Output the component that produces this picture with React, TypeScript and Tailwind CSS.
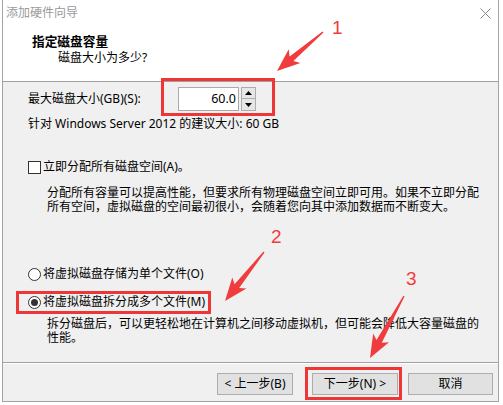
import React from "react";

type Pt = [number, number];

// Polygon for a tapered annotation arrow running from a tail point to its tip.
function arrowPoints(tail: Pt, tip: Pt, head = 19, hw = 9, sw = 3): string {
  const [x1, y1] = tail;
  const [x2, y2] = tip;
  const dx = x2 - x1;
  const dy = y2 - y1;
  const len = Math.hypot(dx, dy);
  const ux = dx / len;
  const uy = dy / len;
  const nx = -uy;
  const ny = ux;
  const bx = x2 - ux * head;
  const by = y2 - uy * head;
  const pts: Pt[] = [
    [x1 + nx * 0.7, y1 + ny * 0.7],
    [bx + nx * sw, by + ny * sw],
    [bx - ux * 4 + nx * hw, by - uy * 4 + ny * hw],
    [x2, y2],
    [bx - ux * 4 - nx * hw, by - uy * 4 - ny * hw],
    [bx - nx * sw, by - ny * sw],
    [x1 - nx * 0.7, y1 - ny * 0.7],
  ];
  return pts.map((p) => `${p[0].toFixed(1)},${p[1].toFixed(1)}`).join(" ");
}

function Radio({ checked }: { checked?: boolean }) {
  return (
    <span className="w-[13px] h-[13px] rounded-full border border-[#333333] bg-white flex items-center justify-center shrink-0">
      {checked && <span className="w-[7px] h-[7px] rounded-full bg-[#333333]" />}
    </span>
  );
}

function Button({ w, children }: { w: string; children: React.ReactNode }) {
  return (
    <div
      className={`${w} h-[22px] bg-[#e1e1e1] border border-[#adadad] flex items-center justify-center leading-[16px] whitespace-nowrap`}
    >
      {children}
    </div>
  );
}

export default function App() {
  return (
    <div className="w-[503px] h-[405px] bg-white relative overflow-hidden font-['Noto_Sans','Noto_Sans_CJK_SC',sans-serif] text-[12px] text-black">
      <div className="ml-[2px] w-[497px] h-[402px] border-x border-b border-[#a3a3a3] flex flex-col">
        {/* title bar */}
        <div className="h-[26px] bg-white flex items-center justify-between pl-[3px] pr-[7px]">
          <span className="text-[#9a9a9a] leading-[16px] text-[12px]">添加硬件向导</span>
          <svg width="11" height="11" viewBox="0 0 11 11">
            <path d="M0.5 0.5 L10.5 10.5 M10.5 0.5 L0.5 10.5" stroke="#8a8a8a" strokeWidth="1" />
          </svg>
        </div>

        {/* header */}
        <div className="h-[56px] bg-white border-b border-[#a0a0a0] pl-[29px] pt-[7px]">
          <div className="font-bold text-[12.7px] leading-[16px]">指定磁盘容量</div>
          <div className="mt-[1px] ml-[26px] leading-[16px]">磁盘大小为多少?</div>
        </div>

        {/* body */}
        <div className="h-[280px] bg-[#f0f0f0] pl-[25px] flex flex-col whitespace-nowrap">
          <div className="mt-[5px] h-[24px] flex items-center">
            <span className="w-[150px] leading-[16px]">最大磁盘大小(GB)(S):</span>
            <div className="w-[61px] h-[24px] bg-white border border-[#a9a9a9] flex items-center justify-end pr-[2px] leading-[16px] text-[12.5px]">
              60.0
            </div>
            <div className="ml-[2px] w-[15px] h-[24px] flex flex-col">
              <div className="h-[12px] bg-[#e6e6e6] border border-[#adadad] flex items-center justify-center">
                <svg width="7" height="4" viewBox="0 0 7 4">
                  <path d="M3.5 0 L7 4 L0 4 Z" fill="#000" />
                </svg>
              </div>
              <div className="h-[12px] bg-[#e6e6e6] border border-t-0 border-[#adadad] flex items-center justify-center">
                <svg width="7" height="4" viewBox="0 0 7 4">
                  <path d="M0 0 L7 0 L3.5 4 Z" fill="#000" />
                </svg>
              </div>
            </div>
          </div>

          <div className="mt-[5px] leading-[16px]">针对 Windows Server 2012 的建议大小: 60 GB</div>

          <div className="mt-[27px] flex items-center gap-[2px] leading-[16px]">
            <span className="w-[13px] h-[13px] border border-[#333333] bg-white shrink-0" />
            <span>立即分配所有磁盘空间(A)。</span>
          </div>

          <div className="mt-[11px] pl-[19px] leading-[14px]">
            <div>分配所有容量可以提高性能，但要求所有物理磁盘空间立即可用。如果不立即分配</div>
            <div>所有空间，虚拟磁盘的空间最初很小，会随着您向其中添加数据而不断变大。</div>
          </div>

          <div className="mt-[52px] flex items-center gap-[2px] leading-[16px]">
            <Radio />
            <span>将虚拟磁盘存储为单个文件(O)</span>
          </div>

          <div className="mt-[12px] flex items-center gap-[2px] leading-[16px]">
            <Radio checked />
            <span>将虚拟磁盘拆分成多个文件(M)</span>
          </div>

          <div className="mt-[7px] pl-[19px] leading-[14px]">
            <div>拆分磁盘后，可以更轻松地在计算机之间移动虚拟机，但可能会降低大容量磁盘的</div>
            <div>性能。</div>
          </div>
        </div>

        {/* footer with wizard buttons */}
        <div className="flex-1 bg-[#f0f0f0] border-t border-[#a0a0a0]">
          <div className="h-full border-t border-white flex justify-end items-start pt-[9px] pr-[5px]">
            <Button w="w-[76px]">&lt; 上一步(B)</Button>
            <div className="ml-[19px]">
              <Button w="w-[86px]">下一步(N) &gt;</Button>
            </div>
            <div className="ml-[10px]">
              <Button w="w-[85px]">取消</Button>
            </div>
          </div>
        </div>
      </div>

      {/* red annotation boxes */}
      <div className="absolute left-[161px] top-[78px] w-[114px] h-[38px] border-[3px] border-[#ef3636]" />
      <div className="absolute left-[16px] top-[291px] w-[195px] h-[23px] border-[3px] border-[#ef3636]" />
      <div className="absolute left-[305px] top-[367px] w-[97px] h-[33px] border-[3px] border-[#ef3636]" />

      {/* annotation arrows */}
      <svg className="absolute left-0 top-0 pointer-events-none" width="503" height="405">
        <polygon points={arrowPoints([323, 32], [277, 71])} fill="#f03c3c" />
        <polygon points={arrowPoints([264, 252], [225, 301])} fill="#f03c3c" />
        <polygon points={arrowPoints([404, 296], [370, 358])} fill="#f03c3c" />
      </svg>

      {/* annotation numbers */}
      <span className="absolute left-[332px] top-[18px] text-[19px] leading-none text-[#f03c3c] font-['Liberation_Sans',sans-serif]">1</span>
      <span className="absolute left-[271px] top-[227px] text-[19px] leading-none text-[#f03c3c] font-['Liberation_Sans',sans-serif]">2</span>
      <span className="absolute left-[406px] top-[269px] text-[19px] leading-none text-[#f03c3c] font-['Liberation_Sans',sans-serif]">3</span>
    </div>
  );
}
